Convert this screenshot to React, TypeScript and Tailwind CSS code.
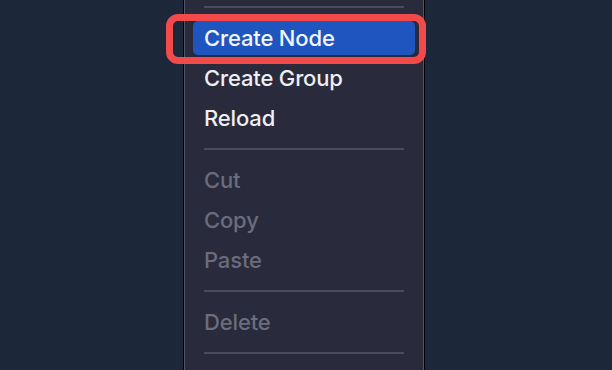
import React from "react";

type Item = { label: string; disabled?: boolean; active?: boolean };
type Entry = Item | "sep";

const entries: Entry[] = [
  "sep",
  { label: "Create Node", active: true },
  { label: "Create Group" },
  { label: "Reload" },
  "sep",
  { label: "Cut", disabled: true },
  { label: "Copy", disabled: true },
  { label: "Paste", disabled: true },
  "sep",
  { label: "Delete", disabled: true },
  "sep",
];

export default function App() {
  return (
    <div
      className="relative w-[612px] h-[370px] overflow-hidden bg-[#1c2839] flex"
      style={{ fontFamily: "Inter, 'Noto Sans', sans-serif" }}
    >
      <div className="ml-[183px] -mt-[4px] w-[242px] h-[400px] border-x border-black bg-[#292a3b]">
        <div className="h-full border-x border-[#55566a] flex flex-col">
          {entries.map((e, i) =>
            e === "sep" ? (
              <div key={i} className="py-[10px] px-[19px]">
                <div className="h-[2px] bg-[#4a4b5b]" />
              </div>
            ) : (
              <div key={i} className="h-[40px] px-[8px] py-[3px] shrink-0">
                <div
                  className={
                    "h-full flex items-center pl-[11px] rounded-[5px] text-[22px] font-medium tracking-[-0.15px] " +
                    (e.active
                      ? "bg-[#1e55bf] text-[#f2f4fa]"
                      : e.disabled
                      ? "text-[#6b6c7d]"
                      : "text-[#eeeef3]")
                  }
                >
                  {e.label}
                </div>
              </div>
            )
          )}
        </div>
      </div>
      <div className="absolute left-[166px] top-[14px] w-[260px] h-[50px] border-[7px] border-[#f24a4b] rounded-[12px]" />
    </div>
  );
}
